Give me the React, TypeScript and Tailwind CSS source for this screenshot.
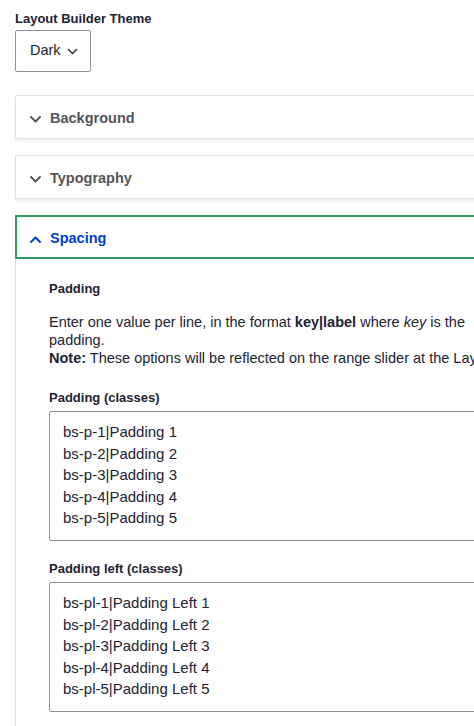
const Chevron = ({ up = false, className = '' }: { up?: boolean; className?: string }) => (
  <svg width="11" height="7" viewBox="0 0 11 7" className={className} fill="none">
    <path
      d={up ? 'M1 6L5.5 1.5L10 6' : 'M1 1L5.5 5.5L10 1'}
      stroke="currentColor"
      strokeWidth="1.9"
      strokeLinecap="round"
      strokeLinejoin="round"
    />
  </svg>
)

// 닫힌 패널
const Panel = ({ title }: { title: string }) => (
  <div className="h-[44px] border border-[#e2e2e4] shadow-[0_2px_3px_rgba(0,0,0,0.07)] bg-white flex items-center pl-[14px] pt-[4px]">
    <Chevron className="text-[#55565b]" />
    <span className="ml-[9px] text-[14.5px] font-bold text-[#55565b]">{title}</span>
  </div>
)

const FieldBox = ({ label, lines }: { label: string; lines: string[] }) => (
  <div>
    <div className="text-[13px] font-bold leading-[16px]">{label}</div>
    <div className="mt-[5px] h-[130px] border border-[#909196] rounded-[2px] pl-[13px] pt-[9px] text-[15px] leading-[21.6px]">
      {lines.map((l) => (
        <div key={l} className="whitespace-nowrap">{l}</div>
      ))}
    </div>
  </div>
)

export default function App() {
  const padding = [1, 2, 3, 4, 5].map((n) => `bs-p-${n}|Padding ${n}`)
  const paddingLeft = [1, 2, 3, 4, 5].map((n) => `bs-pl-${n}|Padding Left ${n}`)

  return (
    <div className="w-[474px] h-[726px] overflow-hidden bg-white text-[#222330] font-['Liberation_Sans',Arial,sans-serif]">
      <div className="w-[760px] pl-[15px] pt-[11px]">
        {/* 테마 선택 */}
        <div className="text-[13px] font-bold leading-[16px]">Layout Builder Theme</div>
        <div className="mt-[3px] w-[76px] h-[42px] border border-[#8e929c] rounded-[2px] flex items-center pl-[14px]">
          <span className="text-[14.5px]">Dark</span>
          <svg width="11" height="7" viewBox="0 0 11 7" className="ml-[6px]" fill="none">
            <path d="M1 1L5.5 5.5L10 1" stroke="#222330" strokeWidth="1.3" />
          </svg>
        </div>

        <div className="mt-[23px] flex flex-col gap-[16px]">
          <Panel title="Background" />
          <Panel title="Typography" />

          {/* 열린 패널 */}
          <div className="border-l border-[#e2e2e4]">
            <div className="h-[44px] border-2 border-[#2f9e63] flex items-center pl-[13px] pt-[4px] -ml-px">
              <Chevron up className="text-[#003ecc]" />
              <span className="ml-[9px] text-[14.5px] font-bold text-[#003ecc]">Spacing</span>
            </div>
            <div className="pl-[33px] pt-[22px] pb-[20px]">
              <div className="text-[13px] font-bold leading-[16px]">Padding</div>
              <div className="mt-[16px] text-[14.5px] leading-[18px] whitespace-nowrap">
                <div>
                  Enter one value per line, in the format <b>key|label</b> where <i>key</i> is the
                </div>
                <div>padding.</div>
                <div>
                  <b>Note:</b> These options will be reflected on the range slider at the Layout Builder.
                </div>
              </div>
              <div className="mt-[23px] flex flex-col gap-[20px]">
                <FieldBox label="Padding (classes)" lines={padding} />
                <FieldBox label="Padding left (classes)" lines={paddingLeft} />
              </div>
            </div>
          </div>
        </div>
      </div>
    </div>
  )
}
